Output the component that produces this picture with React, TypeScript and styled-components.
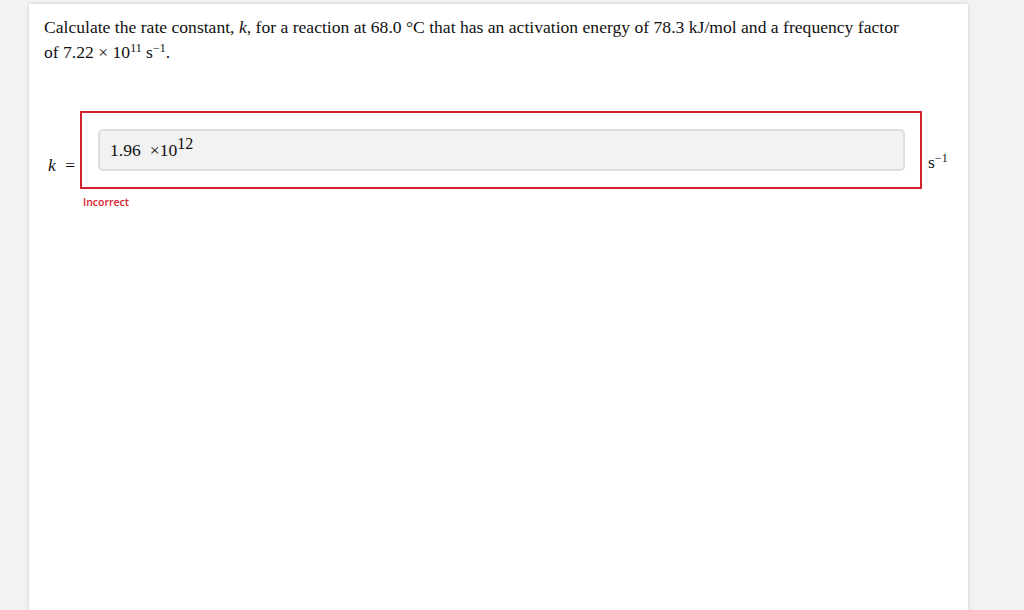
import styled, { createGlobalStyle } from "styled-components";

const GlobalStyle = createGlobalStyle`
  html, body {
    margin: 0;
    padding: 0;
    background: #f2f2f2;
  }
  body {
    font-family: "Liberation Serif", "Times New Roman", serif;
    color: #111;
  }
`;

const Page = styled.div`
  padding: 4px 0 0 29px;
  height: 100vh;
  box-sizing: border-box;
  overflow: hidden;
`;

const Panel = styled.div`
  width: 939px;
  min-height: calc(100vh - 4px);
  box-sizing: border-box;
  background: #fff;
  box-shadow: 0 0 3px rgba(0, 0, 0, 0.18);
  padding: 11px 15px 0 15px;
`;

const Question = styled.p`
  margin: 0;
  font-size: 17.6px;
  line-height: 25px;
  width: 900px;
`;

const Sup = styled.sup<{ $size?: number }>`
  font-size: ${(p) => p.$size ?? 12}px;
  line-height: 0;
  vertical-align: ${(p) => (p.$size ? 7 : 6)}px;
`;

const AnswerRow = styled.div`
  display: flex;
  align-items: flex-start;
  margin-top: 46px;
`;

const Label = styled.div`
  width: 32px;
  padding-left: 4px;
  margin-top: 44px;
  font-size: 17.6px;
  line-height: 20px;
  white-space: nowrap;
  word-spacing: 5px;
`;

const AnswerColumn = styled.div`
  display: flex;
  flex-direction: column;
`;

const ErrorBox = styled.div`
  width: 842px;
  box-sizing: border-box;
  border: 2px solid #d3212d;
  padding: 16px 15px 16px 16px;
`;

const Input = styled.div`
  height: 42px;
  box-sizing: border-box;
  background: #f2f2f2;
  border: 2px solid #dedede;
  border-radius: 5px;
  padding: 9px 0 0 10px;
  font-size: 17.6px;
  line-height: 20px;
`;

const Times = styled.span`
  margin-left: 9px;
`;

const Status = styled.div`
  margin: 5px 0 0 3px;
  font-family: "Open Sans", "Liberation Sans", sans-serif;
  font-size: 10.5px;
  font-weight: 600;
  line-height: 16px;
  color: #d3212d;
`;

const Unit = styled.div`
  margin: 41px 0 0 6px;
  font-size: 17.6px;
  line-height: 20px;
`;

export default function App() {
  return (
    <>
      <GlobalStyle />
      <Page>
        <Panel>
          <Question>
            Calculate the rate constant, <i>k</i>, for a reaction at 68.0 °C that has an activation
            energy of 78.3 kJ/mol and a frequency factor
            <br />
            of 7.22 × 10<Sup>11</Sup> s<Sup>−1</Sup>.
          </Question>
          <AnswerRow>
            <Label>
              <i>k</i> =
            </Label>
            <AnswerColumn>
              <ErrorBox>
                <Input>
                  1.96<Times>×10</Times>
                  <Sup $size={16}>12</Sup>
                </Input>
              </ErrorBox>
              <Status>Incorrect</Status>
            </AnswerColumn>
            <Unit>
              s<Sup>−1</Sup>
            </Unit>
          </AnswerRow>
        </Panel>
      </Page>
    </>
  );
}
